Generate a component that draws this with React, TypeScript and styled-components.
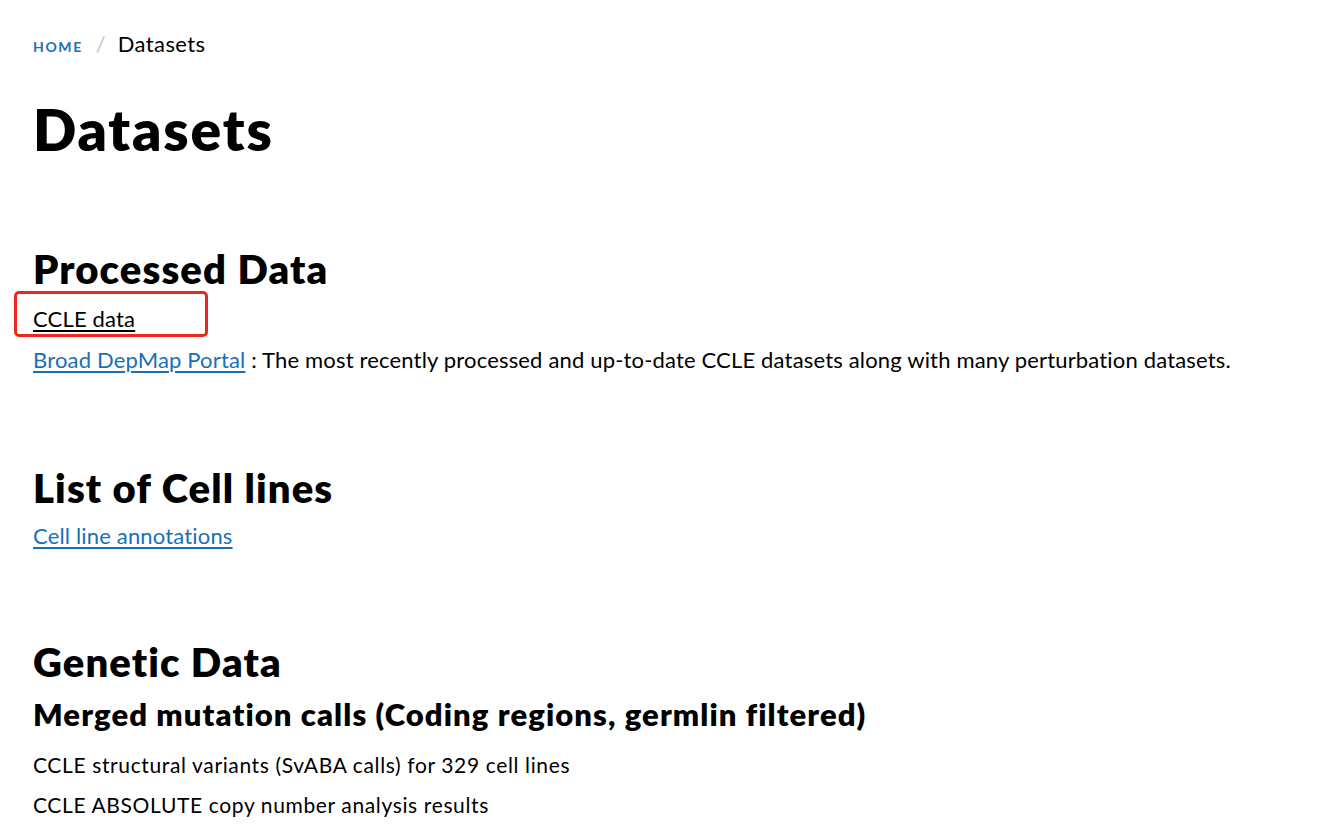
import React from "react";
import styled, { createGlobalStyle } from "styled-components";

const Global = createGlobalStyle`
  html, body { margin: 0; padding: 0; background: #fff; }
  body {
    font-family: Lato, "Open Sans", sans-serif;
    color: #000;
    font-variant-ligatures: none;
  }
`;

const Page = styled.main`
  padding: 31px 33px 0;
`;

const Breadcrumb = styled.nav`
  display: flex;
  align-items: baseline;
  font-size: 22px;
  line-height: 1.2;
`;

const Crumb = styled.a`
  font-size: 14px;
  font-weight: 700;
  letter-spacing: 1.6px;
  color: #1a6fb8;
  text-decoration: none;
`;

const Sep = styled.span`
  color: #c8c8c8;
  font-size: 22px;
  margin: 0 12px 0 13px;
`;

const Current = styled.span`
  font-size: 22px;
  letter-spacing: 0.4px;
`;

const Title = styled.h1`
  margin: 38px 0 0;
  font-size: 57px;
  font-weight: 800;
  letter-spacing: 1.8px;
  line-height: 1.2;
`;

const SectionTitle = styled.h2<{ $gap: number }>`
  margin: ${(p) => p.$gap}px 0 0;
  font-size: 40px;
  font-weight: 800;
  letter-spacing: 1.1px;
  line-height: 1.2;
`;

const SubTitle = styled.h3`
  margin: 10px 0 0;
  font-size: 31px;
  font-weight: 800;
  letter-spacing: 1.08px;
  line-height: 1.2;
`;

const Line = styled.p<{ $gap: number }>`
  margin: ${(p) => p.$gap}px 0 0;
  font-size: 22px;
  letter-spacing: 0.17px;
  line-height: 1.2;
`;

const SmallLine = styled.p<{ $gap: number }>`
  margin: ${(p) => p.$gap}px 0 0;
  font-size: 21px;
  letter-spacing: 0.63px;
  line-height: 1.2;
`;

const Link = styled.a<{ $dark?: boolean }>`
  color: ${(p) => (p.$dark ? "#000" : "#1a6fb8")};
  text-decoration: underline;
  text-underline-offset: 3px;
  text-decoration-thickness: 2px;
`;

const Highlight = styled.span`
  position: relative;
  display: inline-block;
  &::after {
    content: "";
    position: absolute;
    left: -19px;
    top: -15px;
    width: 194px;
    height: 46px;
    box-sizing: border-box;
    border: 3px solid #f0261c;
    border-radius: 5px;
    pointer-events: none;
  }
`;

export default function App() {
  return (
    <>
      <Global />
      <Page>
        <Breadcrumb>
          <Crumb href="#">HOME</Crumb>
          <Sep>/</Sep>
          <Current>Datasets</Current>
        </Breadcrumb>
        <Title>Datasets</Title>

        <SectionTitle $gap={81}>Processed Data</SectionTitle>
        <Line $gap={13}>
          <Highlight>
            <Link $dark href="#">CCLE data</Link>
          </Highlight>
        </Line>
        <Line $gap={15}>
          <Link href="#">Broad DepMap Portal</Link> : The most recently processed and
          up-to-date CCLE datasets along with many perturbation datasets.
        </Line>

        <SectionTitle $gap={90}>List of Cell lines</SectionTitle>
        <Line $gap={11}>
          <Link href="#">Cell line annotations</Link>
        </Line>

        <SectionTitle $gap={89}>Genetic Data</SectionTitle>
        <SubTitle>Merged mutation calls (Coding regions, germlin filtered)</SubTitle>
        <SmallLine $gap={19}>CCLE structural variants (SvABA calls) for 329 cell lines</SmallLine>
        <SmallLine $gap={15}>CCLE ABSOLUTE copy number analysis results</SmallLine>
      </Page>
    </>
  );
}
